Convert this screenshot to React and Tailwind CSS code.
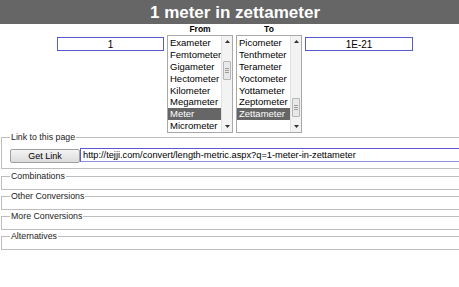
import React from "react";

const FROM_UNITS = [
  "Exameter",
  "Femtometer",
  "Gigameter",
  "Hectometer",
  "Kilometer",
  "Megameter",
  "Meter",
  "Micrometer",
];
const TO_UNITS = [
  "Picometer",
  "Tenthmeter",
  "Terameter",
  "Yoctometer",
  "Yottameter",
  "Zeptometer",
  "Zettameter",
  "",
];

const SECTIONS = ["Combinations", "Other Conversions", "More Conversions", "Alternatives"];

function Arrow({ down }) {
  return (
    <svg width="5" height="3" viewBox="0 0 5 3" className="block">
      {down ? <path d="M0 0h5L2.5 3z" fill="#333" /> : <path d="M0 3h5L2.5 0z" fill="#333" />}
    </svg>
  );
}

function ScrollBar({ thumbClass }) {
  return (
    <div className="w-[11px] flex flex-col bg-[#f3f3f3] border-l border-[#e2e2e2]">
      <div className="h-[11px] flex items-center justify-center">
        <Arrow />
      </div>
      {/* thumb */}
      <div
        className={`mx-[1px] h-[19px] flex flex-col items-center justify-center gap-[1px] bg-[#e9e9e9] border border-[#b5b5b5] rounded-[1px] ${thumbClass}`}
      >
        <div className="w-[4px] h-px bg-[#9a9a9a]" />
        <div className="w-[4px] h-px bg-[#9a9a9a]" />
        <div className="w-[4px] h-px bg-[#9a9a9a]" />
      </div>
      <div className="mt-auto h-[11px] flex items-center justify-center">
        <Arrow down />
      </div>
    </div>
  );
}

function ListBox({ label, items, selected, thumbClass }) {
  return (
    <div className="flex flex-col items-center">
      <div className="h-[11px] leading-[11px] text-[8.5px] font-bold text-black">{label}</div>
      <div className="flex w-[66px] h-[98px] border border-[#a8a8a8] bg-white">
        <div className="flex-1 min-w-0 flex flex-col pt-px">
          {items.map((it, i) => (
            <div
              key={i}
              className={`h-[12px] leading-[12px] pl-[2px] text-[9.5px] whitespace-nowrap overflow-hidden ${
                it === selected ? "bg-[#666666] text-white" : "text-black"
              }`}
            >
              {it}
            </div>
          ))}
        </div>
        <ScrollBar thumbClass={thumbClass} />
      </div>
    </div>
  );
}

function Section({ title, children, className = "" }) {
  return (
    <fieldset className={`border border-[#bdbdbd] ml-px pl-[8px] ${className}`}>
      <legend className="px-px h-[10px] leading-[10px] text-[8.8px] text-[#222]">{title}</legend>
      {children}
    </fieldset>
  );
}

export default function App() {
  return (
    <div
      className="w-[459px] h-[287px] overflow-hidden bg-white"
      style={{ fontFamily: '"Liberation Sans", Arial, sans-serif' }}
    >
      <div className="w-[470px]">
        {/* Title bar */}
        <div className="h-[24px] bg-[#666666] flex items-center justify-center">
          <h1 className="text-[17px] font-bold text-white leading-none">1 meter in zettameter</h1>
        </div>

        {/* Converter */}
        <div className="flex items-start justify-center gap-[3px]">
          <input
            readOnly
            value="1"
            className="mt-[13px] w-[107px] h-[14px] border border-[#5a5ad0] text-center text-[10px] leading-[12px] text-black outline-none"
          />
          <ListBox label="From" items={FROM_UNITS} selected="Meter" thumbClass="mt-[14px]" />
          <ListBox label="To" items={TO_UNITS} selected="Zettameter" thumbClass="mt-[51px]" />
          <input
            readOnly
            value="1E-21"
            className="mt-[13px] w-[108px] h-[14px] border border-[#5a5ad0] text-center text-[10px] leading-[12px] text-black outline-none"
          />
        </div>

        {/* Link to this page */}
        <Section title="Link to this page" className="-mt-px pb-[5px]">
          <div className="flex items-start mt-[6px]">
            <button
              type="button"
              className="w-[70px] h-[14px] mt-px bg-gradient-to-b from-[#f4f4f4] to-[#dcdcdc] border border-[#a0a0a0] rounded-[2px] text-[9px] leading-[12px] text-black"
            >
              Get Link
            </button>
            <input
              readOnly
              value="http://tejji.com/convert/length-metric.aspx?q=1-meter-in-zettameter"
              className="flex-1 h-[14px] border border-[#5a5ad0] border-b-[#8f8fe6] pl-[2px] text-[9.25px] leading-[12px] text-black outline-none"
            />
          </div>
        </Section>

        <div className="pt-px">
          {SECTIONS.map((s) => (
            <Section key={s} title={s} className="mt-px h-[19px]" />
          ))}
        </div>
      </div>
    </div>
  );
}
